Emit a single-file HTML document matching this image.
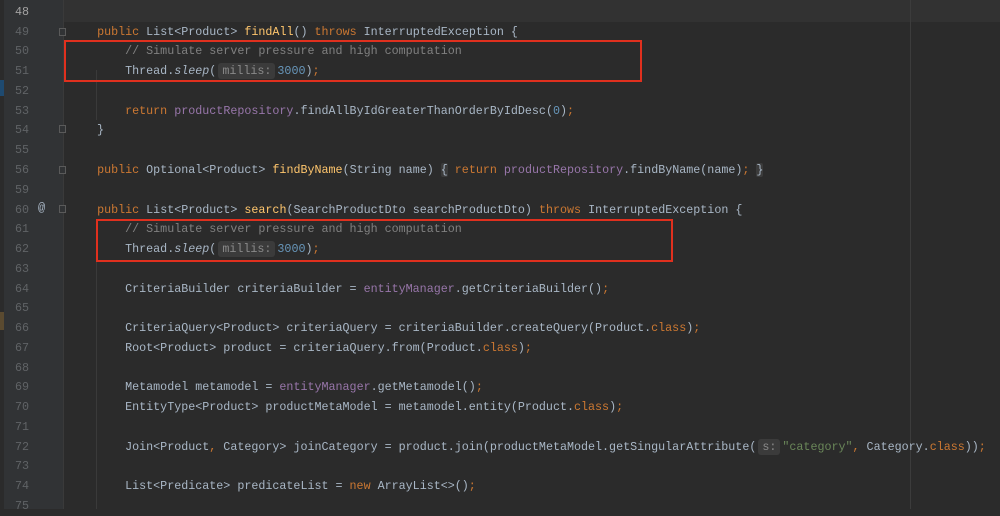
<!DOCTYPE html>
<html><head><style>
body{margin:0;width:1000px;height:509px;overflow:hidden;background:#2b2b2b;position:relative;font-family:"Liberation Mono",monospace;font-size:11.7px}
.g{position:absolute;left:0;top:0;width:63px;height:509px;background:#313335;border-right:1px solid #3a3a3a}
.strip{position:absolute;left:0;top:0;width:4px;height:509px;background:#2b2b2b}
.cur{position:absolute;left:0;top:0;width:1000px;height:22px;background:#323232}
.n{position:absolute;left:0;width:29px;text-align:right;color:#606366;line-height:20px}
.l{position:absolute;left:69px;white-space:pre;color:#a9b7c6;line-height:20px}
.k{color:#cc7832}.m{color:#ffc66d}.f{color:#9876aa}.c{color:#808080}.num{color:#6897bb}.s{color:#6a8759}.i{font-style:italic}
.h{background:#3b3b3b;color:#8a8a8a;border-radius:3px;padding:1px 4px;margin:0 2px}
.fb{background:#3b3b3b;border-radius:2px}
.box{position:absolute;border:2px solid #e0301e;box-sizing:border-box}
.guide{position:absolute;left:96px;width:1px;background:#3a3a3a}
.vline{position:absolute;left:910px;top:0;width:1px;height:509px;background:#3c3c3c}
.fold{position:absolute;left:59px;width:7px;height:8px;border:1px solid #5a5a5a;box-sizing:border-box;background:#313335}
</style></head><body>
<div class="cur"></div>
<div class="g"></div><div class="strip"></div>
<div style="position:absolute;left:0;top:80px;width:4px;height:16px;background:#1e4a70"></div>
<div style="position:absolute;left:0;top:312px;width:4px;height:18px;background:#5a4a30"></div>
<div class="vline"></div>
<div class="guide" style="top:70px;height:50px"></div>
<div class="guide" style="top:260px;height:249px"></div>
<div class="fold" style="top:28px"></div><div class="fold" style="top:125px"></div><div class="fold" style="top:166px"></div><div class="fold" style="top:205px"></div>
<div style="position:absolute;left:38px;top:201px;color:#a9b7c6;font-size:12px">@</div>
<div class="n" style="top:2px;color:#a4a3a3">48</div>
<div class="n" style="top:22px">49</div><div class="n" style="top:41px">50</div><div class="n" style="top:61px">51</div><div class="n" style="top:81px">52</div><div class="n" style="top:101px">53</div><div class="n" style="top:120px">54</div><div class="n" style="top:140px">55</div><div class="n" style="top:160px">56</div><div class="n" style="top:180px">59</div><div class="n" style="top:200px">60</div><div class="n" style="top:219px">61</div><div class="n" style="top:239px">62</div><div class="n" style="top:259px">63</div><div class="n" style="top:279px">64</div><div class="n" style="top:298px">65</div><div class="n" style="top:318px">66</div><div class="n" style="top:338px">67</div><div class="n" style="top:358px">68</div><div class="n" style="top:377px">69</div><div class="n" style="top:397px">70</div><div class="n" style="top:417px">71</div><div class="n" style="top:437px">72</div><div class="n" style="top:456px">73</div><div class="n" style="top:476px">74</div><div class="n" style="top:496px">75</div>

<div class="l" style="top:22px">    <span class="k">public</span> List&lt;Product&gt; <span class="m">findAll</span>() <span class="k">throws</span> InterruptedException {</div>
<div class="l" style="top:41px">        <span class="c">// Simulate server pressure and high computation</span></div>
<div class="l" style="top:61px">        Thread.<span class="i">sleep</span>(<span class="h">millis:</span><span class="num">3000</span>)<span class="k">;</span></div>
<div class="l" style="top:101px">        <span class="k">return </span><span class="f">productRepository</span>.findAllByIdGreaterThanOrderByIdDesc(<span class="num">0</span>)<span class="k">;</span></div>
<div class="l" style="top:120px">    }</div>
<div class="l" style="top:160px">    <span class="k">public</span> Optional&lt;Product&gt; <span class="m">findByName</span>(String name) <span class="fb">{</span> <span class="k">return</span> <span class="f">productRepository</span>.findByName(name)<span class="k">;</span> <span class="fb">}</span></div>
<div class="l" style="top:200px">    <span class="k">public</span> List&lt;Product&gt; <span class="m">search</span>(SearchProductDto searchProductDto) <span class="k">throws</span> InterruptedException {</div>
<div class="l" style="top:219px">        <span class="c">// Simulate server pressure and high computation</span></div>
<div class="l" style="top:239px">        Thread.<span class="i">sleep</span>(<span class="h">millis:</span><span class="num">3000</span>)<span class="k">;</span></div>
<div class="l" style="top:279px">        CriteriaBuilder criteriaBuilder = <span class="f">entityManager</span>.getCriteriaBuilder()<span class="k">;</span></div>
<div class="l" style="top:318px">        CriteriaQuery&lt;Product&gt; criteriaQuery = criteriaBuilder.createQuery(Product.<span class="k">class</span>)<span class="k">;</span></div>
<div class="l" style="top:338px">        Root&lt;Product&gt; product = criteriaQuery.from(Product.<span class="k">class</span>)<span class="k">;</span></div>
<div class="l" style="top:377px">        Metamodel metamodel = <span class="f">entityManager</span>.getMetamodel()<span class="k">;</span></div>
<div class="l" style="top:397px">        EntityType&lt;Product&gt; productMetaModel = metamodel.entity(Product.<span class="k">class</span>)<span class="k">;</span></div>
<div class="l" style="top:437px">        Join&lt;Product<span class="k">,</span> Category&gt; joinCategory = product.join(productMetaModel.getSingularAttribute(<span class="h">s:</span><span class="s">"category"</span><span class="k">,</span> Category.<span class="k">class</span>))<span class="k">;</span></div>
<div class="l" style="top:476px">        List&lt;Predicate&gt; predicateList = <span class="k">new</span> ArrayList&lt;&gt;()<span class="k">;</span></div>

<div class="box" style="left:64px;top:40px;width:578px;height:42px"></div>
<div class="box" style="left:96px;top:219px;width:577px;height:43px"></div>
</body></html>
